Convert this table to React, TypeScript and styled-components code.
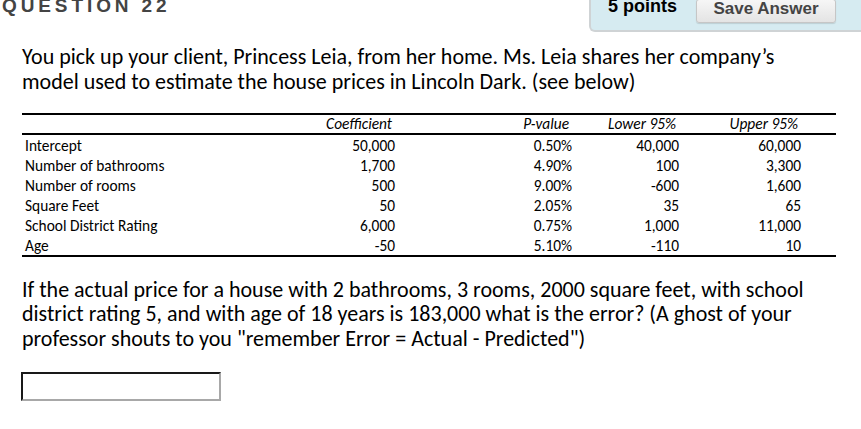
import React from "react";
import styled, { createGlobalStyle } from "styled-components";

const GlobalStyle = createGlobalStyle`
    body {
        margin: 0;
        background-color: #ffffff;
        font-family: Carlito, Calibri, Lato, sans-serif;
        color: #000000;
    }
`;

const TopBar = styled.div`
    display: flex;
    justify-content: space-between;
    align-items: flex-start;
    height: 34px;
`;

const QuestionTitle = styled.h2`
    margin: -5px 0 0 2px;
    font-family: "Liberation Sans", Arial, sans-serif;
    font-size: 19px;
    font-weight: 700;
    letter-spacing: 3.9px;
    color: #444444;
    line-height: 22px;
`;

const PointsPanel = styled.div`
    display: flex;
    align-items: flex-start;
    gap: 19px;
    width: 272px;
    height: 32px;
    padding-left: 17px;
    box-sizing: border-box;
    background-color: #d6ebf1;
    border-left: 2px solid #cfd3d5;
    border-bottom: 2px solid #cfd3d5;
    border-bottom-left-radius: 6px;
`;

const Points = styled.span`
    font-family: "Liberation Sans", Arial, sans-serif;
    font-size: 18px;
    font-weight: 700;
    margin-top: -5px;
    line-height: 22px;
`;

const SaveButton = styled.button`
    width: 140px;
    height: 24px;
    margin-top: -1px;
    padding: 0;
    font-family: "Liberation Sans", Arial, sans-serif;
    font-size: 17px;
    font-weight: 700;
    color: #444444;
    line-height: 18px;
    background: linear-gradient(#f6f6f6, #e4e4e4);
    border: 1px solid #c6c6c6;
    border-radius: 3px;
    box-shadow: 0 1px 1px rgba(0, 0, 0, 0.12);
    display: flex;
    justify-content: center;
    align-items: flex-start;
`;

const Content = styled.div`
    padding-left: 22px;
    width: 814px;
`;

const Paragraph = styled.p<{ $top: number; $lh: number }>`
    margin: ${(p) => p.$top}px 0 0 0;
    font-size: 22px;
    line-height: ${(p) => p.$lh}px;
    white-space: nowrap;
`;

const Table = styled.table`
    margin-top: 19px;
    width: 814px;
    border-collapse: separate;
    border-spacing: 0;
    table-layout: fixed;
    font-size: 15.4px;
    border-top: 2px solid #000;
    border-bottom: 2px solid #000;
`;

const HeadCell = styled.th<{ $w?: number }>`
    box-sizing: border-box;
    width: ${(p) => (p.$w ? `${p.$w}px` : "auto")};
    height: 20px;
    font-style: italic;
    font-weight: 400;
    text-align: right;
    padding: 0 6px 0 0;
    line-height: 18px;
    border-bottom: 2px solid #000;
`;

const LabelCell = styled.td`
    height: 20px;
    box-sizing: border-box;
    text-align: left;
    padding: 1px 0 0 3px;
    line-height: 19px;
`;

const NumCell = styled.td`
    height: 20px;
    box-sizing: border-box;
    text-align: right;
    padding: 1px 3px 0 0;
    line-height: 19px;
`;

const AnswerBox = styled.input`
    display: block;
    margin-top: 21px;
    margin-left: -1px;
    width: 200px;
    height: 29px;
    box-sizing: border-box;
    border: 2px inset #8a8a8a;
    border-top-color: #6e6e6e;
    border-left-color: #6e6e6e;
    border-right-color: #a8a8a8;
    border-bottom-color: #a8a8a8;
    background: #fff;
    outline: none;
`;

type Coef = {
    name: string;
    coefficient: string;
    pValue: string;
    lower: string;
    upper: string;
};

const rows: Coef[] = [
    { name: "Intercept", coefficient: "50,000", pValue: "0.50%", lower: "40,000", upper: "60,000" },
    { name: "Number of bathrooms", coefficient: "1,700", pValue: "4.90%", lower: "100", upper: "3,300" },
    { name: "Number of rooms", coefficient: "500", pValue: "9.00%", lower: "-600", upper: "1,600" },
    { name: "Square Feet", coefficient: "50", pValue: "2.05%", lower: "35", upper: "65" },
    { name: "School District Rating", coefficient: "6,000", pValue: "0.75%", lower: "1,000", upper: "11,000" },
    { name: "Age", coefficient: "-50", pValue: "5.10%", lower: "-110", upper: "10" },
];

function App() {
    return (
        <>
            <GlobalStyle />
            <TopBar>
                <QuestionTitle>QUESTION 22</QuestionTitle>
                <PointsPanel>
                    <Points>5 points</Points>
                    <SaveButton>Save Answer</SaveButton>
                </PointsPanel>
            </TopBar>
            <Content>
                <Paragraph $top={10} $lh={25}>
                    You pick up your client, Princess Leia, from her home. Ms. Leia shares her company’s
                    <br />
                    model used to estimate the house prices in Lincoln Dark. (see below)
                </Paragraph>
                <Table>
                    <thead>
                        <tr>
                            <HeadCell $w={238} />
                            <HeadCell $w={138}>Coefficient</HeadCell>
                            <HeadCell $w={177}>P-value</HeadCell>
                            <HeadCell $w={107}>Lower 95%</HeadCell>
                            <HeadCell $w={122}>Upper 95%</HeadCell>
                            <HeadCell />
                        </tr>
                    </thead>
                    <tbody>
                        {rows.map((r) => (
                            <tr key={r.name}>
                                <LabelCell>{r.name}</LabelCell>
                                <NumCell>{r.coefficient}</NumCell>
                                <NumCell>{r.pValue}</NumCell>
                                <NumCell>{r.lower}</NumCell>
                                <NumCell>{r.upper}</NumCell>
                                <NumCell />
                            </tr>
                        ))}
                    </tbody>
                </Table>
                <Paragraph $top={21} $lh={24.3}>
                    If the actual price for a house with 2 bathrooms, 3 rooms, 2000 square feet, with school
                    <br />
                    district rating 5, and with age of 18 years is 183,000 what is the error? (A ghost of your
                    <br />
                    professor shouts to you "remember Error = Actual - Predicted")
                </Paragraph>
                <AnswerBox type="text" />
            </Content>
        </>
    );
}

export default App;
